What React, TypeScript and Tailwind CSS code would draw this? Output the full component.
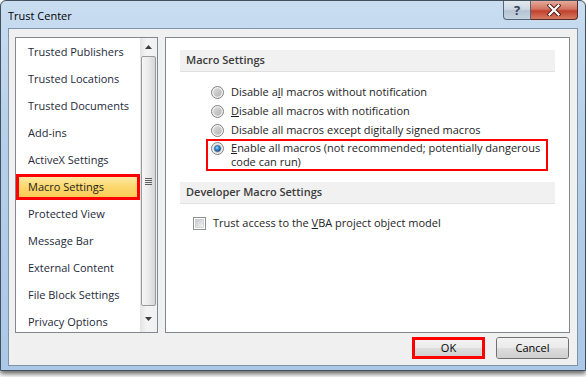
import type { ReactNode } from "react";

const categories = [
  "Trusted Publishers",
  "Trusted Locations",
  "Trusted Documents",
  "Add-ins",
  "ActiveX Settings",
  "Macro Settings",
  "Protected View",
  "Message Bar",
  "External Content",
  "File Block Settings",
  "Privacy Options",
];

function Radio({ checked = false }: { checked?: boolean }) {
  return (
    <svg width="13" height="13" viewBox="0 0 13 13" className="shrink-0">
      <defs>
        <linearGradient id={checked ? "rOn" : "rOff"} x1="0" y1="0" x2="1" y2="1">
          <stop offset="0" stopColor="#dcdcdc" />
          <stop offset="1" stopColor="#b4b4b4" />
        </linearGradient>
        <radialGradient id="rDot" cx="0.4" cy="0.35" r="0.7">
          <stop offset="0" stopColor="#9fd8ff" />
          <stop offset="0.5" stopColor="#2f8ad6" />
          <stop offset="1" stopColor="#124f8f" />
        </radialGradient>
      </defs>
      <circle cx="6.5" cy="6.5" r="6" fill="#f0f0f0" stroke="#7f7f7f" />
      <circle cx="6.5" cy="6.5" r="4.2" fill={`url(#${checked ? "rOn" : "rOff"})`} />
      {checked ? <circle cx="6.5" cy="6.5" r="3" fill="url(#rDot)" stroke="#1b4f80" strokeWidth="0.6" /> : null}
    </svg>
  );
}

function Checkbox() {
  return (
    <svg width="13" height="13" viewBox="0 0 13 13" className="shrink-0">
      <defs>
        <linearGradient id="cbFill" x1="0" y1="0" x2="1" y2="1">
          <stop offset="0" stopColor="#c4c8cd" />
          <stop offset="1" stopColor="#f4f4f4" />
        </linearGradient>
      </defs>
      <rect x="0.5" y="0.5" width="12" height="12" fill="#fff" stroke="#8e8f8f" />
      <rect x="2.5" y="2.5" width="8" height="8" fill="url(#cbFill)" stroke="#bfc2c6" strokeWidth="0.6" />
    </svg>
  );
}

function Option({ children, checked = false, marked = false }: { children: ReactNode; checked?: boolean; marked?: boolean }) {
  return (
    <div
      className={`flex w-[342px] items-start gap-[7px] border-2 pl-[3px] leading-[14px] ${
        marked ? "border-[#ff0000]" : "border-transparent py-[0.5px]"
      }`}
    >
      <div className="pt-[1px]">
        <Radio checked={checked} />
      </div>
      <div className="text-[#1e1e1e]">{children}</div>
    </div>
  );
}

function Band({ children }: { children: ReactNode }) {
  return (
    <div className="mx-[14px] flex h-[22px] items-center border-b border-[#e0e0e0] bg-[#f1f1f1] pl-[6px] font-semibold text-[#3b3b3b]">
      {children}
    </div>
  );
}

function WinButton({ children }: { children: ReactNode }) {
  return (
    <div className="flex h-full w-full items-center justify-center rounded-[2px] bg-[linear-gradient(180deg,#f2f2f2_0%,#ebebeb_48%,#dddddd_52%,#cfcfcf_100%)] text-black">
      {children}
    </div>
  );
}

export default function App() {
  return (
    <div className="h-[377px] w-[586px] overflow-hidden bg-white font-['Open_Sans','Noto_Sans',sans-serif] text-[11px]">
      <div className="flex h-[371px] w-[586px] flex-col rounded-t-[6px] border border-[#43505e] bg-[linear-gradient(180deg,#c9ddf1_0%,#b6d0ea_35%,#abc8e6_100%)] pb-[4px] shadow-[0_3px_5px_rgba(0,0,0,0.6)]">
        {/* title bar */}
        <div className="flex h-[27px] items-start">
          <span className="pl-[7px] pt-[7px] text-black">Trust Center</span>
          <div className="ml-auto mr-[7px] flex">
            <div className="flex h-[19px] w-[28px] items-center justify-center rounded-bl-[4px] border border-t-0 border-[#55667b] bg-[linear-gradient(180deg,#e2e8ef_0%,#cfd8e2_45%,#b5c3d3_55%,#c6d3e1_100%)] text-[13px] font-bold leading-none text-[#31445c]">
              ?
            </div>
            <div className="flex h-[19px] w-[47px] items-center justify-center rounded-br-[4px] border border-l-0 border-t-0 border-[#5b2a22] bg-[linear-gradient(180deg,#e6ab9c_0%,#d27462_45%,#c1412e_55%,#d57a63_100%)]">
              <svg width="14" height="12" viewBox="0 0 14 12">
                <path d="M2.5 1.5 L11.5 10.5 M11.5 1.5 L2.5 10.5" stroke="#4a1a12" strokeWidth="4" strokeLinecap="square" />
                <path d="M2.5 1.5 L11.5 10.5 M11.5 1.5 L2.5 10.5" stroke="#ffffff" strokeWidth="2.2" strokeLinecap="square" />
              </svg>
            </div>
          </div>
        </div>

        {/* client area */}
        <div className="mx-[7px] flex h-[338px] flex-col border border-[#8193a8] bg-[#f0f0f0] pl-[6px] pr-[7px] pt-[8px]">
          <div className="flex h-[296px] gap-[7px]">
            {/* category list */}
            <div className="flex w-[143px] overflow-hidden border border-[#828790] bg-white">
              <div className="flex-1 pt-[1px]">
                {categories.map((c) =>
                  c === "Macro Settings" ? (
                    <div key={c} className="mb-[1px] flex h-[26px] items-center border-[3px] border-[#ff0000] bg-[linear-gradient(180deg,#fde9a2_0%,#fcd86e_50%,#f9cb55_100%)] pl-[9px] text-[#1e1e1e]">
                      {c}
                    </div>
                  ) : (
                    <div key={c} className="flex h-[27px] items-center pl-[12px] text-[#1e2a3a]">
                      {c}
                    </div>
                  ),
                )}
              </div>
              {/* scrollbar */}
              <div className="flex w-[17px] flex-col bg-[linear-gradient(90deg,#e4e4e4_0%,#f4f4f4_40%,#f0f0f0_100%)]">
                <div className="flex h-[18px] items-center justify-center">
                  <svg width="7" height="4" viewBox="0 0 7 4">
                    <path d="M3.5 0 L7 4 L0 4 Z" fill="#3c3c3c" />
                  </svg>
                </div>
                <div className="mx-[1px] flex h-[250px] items-center justify-center rounded-[2px] border border-[#9a9a9a] bg-[linear-gradient(90deg,#f6f6f6_0%,#eaeaea_50%,#d6d6d6_100%)]">
                  <div className="flex flex-col gap-[1px]">
                    <div className="h-[1px] w-[7px] bg-[#5f5f5f]" />
                    <div className="h-[1px] w-[7px] bg-[#5f5f5f]" />
                    <div className="h-[1px] w-[7px] bg-[#5f5f5f]" />
                    <div className="h-[1px] w-[7px] bg-[#5f5f5f]" />
                  </div>
                </div>
                <div className="flex flex-1 items-center justify-center">
                  <svg width="7" height="4" viewBox="0 0 7 4">
                    <path d="M0 0 L7 0 L3.5 4 Z" fill="#3c3c3c" />
                  </svg>
                </div>
              </div>
            </div>

            {/* settings panel */}
            <div className="flex-1 border border-[#828790] bg-white pt-[12px]">
              <Band>Macro Settings</Band>
              <div className="ml-[40px] mt-[10px] flex flex-col">
                <Option>
                  Disable a<u>l</u>l macros without notification
                </Option>
                <Option>
                  <u>D</u>isable all macros with notification
                </Option>
                <Option>
                  Disable all macros except di<u>g</u>itally signed macros
                </Option>
                <Option checked marked>
                  <div className="whitespace-nowrap">
                    <u>E</u>nable all macros (not recommended; potentially dangerous
                  </div>
                  <div>code can run)</div>
                </Option>
              </div>
              <div className="mt-[11px]">
                <Band>Developer Macro Settings</Band>
              </div>
              <div className="ml-[27px] mt-[12px] flex h-[15px] items-center gap-[7px]">
                <Checkbox />
                <span className="text-[#1e1e1e]">
                  Trust access to the <u>V</u>BA project object model
                </span>
              </div>
            </div>
          </div>

          {/* dialog buttons */}
          <div className="mr-[1px] mt-[4px] flex justify-end gap-[11px]">
            <div className="h-[22px] w-[73px] border-[3px] border-[#ff0000]">
              <WinButton>OK</WinButton>
            </div>
            <div className="h-[22px] w-[73px] rounded-[3px] border border-[#707070]">
              <WinButton>Cancel</WinButton>
            </div>
          </div>
        </div>
      </div>
    </div>
  );
}
